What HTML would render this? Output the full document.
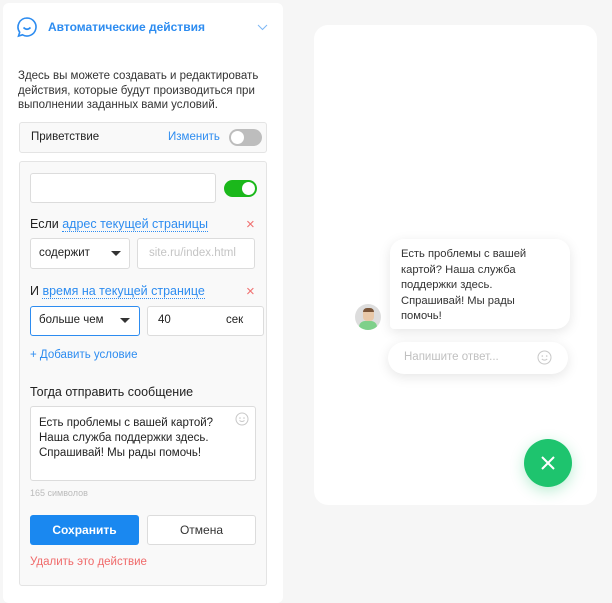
<!DOCTYPE html>
<html><head><meta charset="utf-8"><style>
*{box-sizing:border-box;margin:0;padding:0}
body{width:612px;height:589px;background:#f6f6f6;font-family:"Liberation Sans",sans-serif;position:relative;overflow:hidden;color:#222}
.a{position:absolute}
.left{left:3px;top:3px;width:280px;height:600px;background:#fff;border-radius:6px}
.box{background:#f9f9f9;border:1px solid #e4e4e4;border-radius:3px}
.inp{background:#fff;border:1px solid #dcdcdc;border-radius:3px}
.t12{font-size:11.5px}
.blue{color:#2d8cf0}
.dash{border-bottom:1px dotted #2d8cf0;line-height:13px}
.tri{width:0;height:0;border-left:5px solid transparent;border-right:5px solid transparent;border-top:5px solid #333}
</style></head><body>
<div class="a left"></div>
<svg class="a" style="left:16px;top:16px" width="22" height="22" viewBox="0 0 22 22"><path d="M11 2a9 9 0 1 1-4.5 16.8L2.5 20l1.2-3.8A9 9 0 0 1 11 2z" fill="none" stroke="#2d8cf0" stroke-width="1.6"/><path d="M7.5 11.5q3.5 3.5 7 0" fill="none" stroke="#2d8cf0" stroke-width="1.6"/></svg>
<div class="a blue" style="left:48px;top:20px;font-size:12px;font-weight:bold">Автоматические действия</div>
<svg class="a" style="left:257px;top:24px" width="11" height="8"><path d="M1 1l4.5 4.5L10 1" fill="none" stroke="#7db7f5" stroke-width="1"/></svg>
<div class="a t12" style="left:18px;top:69px;line-height:14.5px;color:#333;width:260px">Здесь вы можете создавать и редактировать действия, которые будут производиться при выполнении заданных вами условий.</div>
<div class="a box" style="left:19px;top:122px;width:248px;height:31px"></div>
<div class="a t12" style="left:31px;top:131px;color:#222">Приветствие</div>
<div class="a t12 blue" style="left:168px;top:131px">Изменить</div>
<div class="a" style="left:229px;top:129px;width:33px;height:17px;border-radius:9px;background:#bdbdbd"><div class="a" style="left:2px;top:2px;width:13px;height:13px;border-radius:50%;background:#fff"></div></div>
<div class="a box" style="left:19px;top:161px;width:248px;height:425px"></div>
<div class="a inp" style="left:30px;top:173px;width:186px;height:30px"></div>
<div class="a" style="left:224px;top:180px;width:33px;height:17px;border-radius:9px;background:#1bb81b"><div class="a" style="left:18px;top:2px;width:13px;height:13px;border-radius:50%;background:#fff"></div></div>
<div class="a" style="left:30px;top:217px;font-size:12.5px">Если <span class="blue dash">адрес текущей страницы</span></div>
<div class="a" style="left:246px;top:216px;color:#f07070;font-size:15px">×</div>
<div class="a inp" style="left:30px;top:238px;width:100px;height:31px"></div>
<div class="a t12" style="left:39px;top:247px">содержит</div><div class="a tri" style="left:111px;top:251px"></div>
<div class="a inp" style="left:137px;top:238px;width:118px;height:31px"></div>
<div class="a t12" style="left:149px;top:247px;color:#c4c4c4">site.ru/index.html</div>
<div class="a" style="left:30px;top:284px;font-size:12.5px">И <span class="blue dash">время на текущей странице</span></div>
<div class="a" style="left:246px;top:283px;color:#f07070;font-size:15px">×</div>
<div class="a inp" style="left:30px;top:306px;width:110px;height:30px;border-color:#2d8cf0"></div>
<div class="a t12" style="left:39px;top:314px">больше чем</div><div class="a tri" style="left:120px;top:318px"></div>
<div class="a inp" style="left:147px;top:306px;width:117px;height:30px"></div>
<div class="a t12" style="left:158px;top:314px">40</div><div class="a t12" style="left:226px;top:314px">сек</div>
<div class="a t12 blue" style="left:30px;top:349px">+ Добавить условие</div>
<div class="a" style="left:30px;top:385px;font-size:12.5px">Тогда отправить сообщение</div>
<div class="a inp" style="left:30px;top:406px;width:226px;height:75px"></div>
<div class="a t12" style="left:39px;top:416px;line-height:15px">Есть проблемы с вашей картой?<br>Наша служба поддержки здесь.<br>Спрашивай! Мы рады помочь!</div>
<svg class="a" style="left:235px;top:412px" width="14" height="14"><circle cx="7" cy="7" r="6" fill="none" stroke="#c8c8c8"/><circle cx="5" cy="6" r=".8" fill="#c8c8c8"/><circle cx="9" cy="6" r=".8" fill="#c8c8c8"/><path d="M4.5 8.5q2.5 2 5 0" fill="none" stroke="#c8c8c8"/></svg>
<div class="a" style="left:30px;top:488px;font-size:9px;color:#bbb">165 символов</div>
<div class="a" style="left:30px;top:515px;width:109px;height:30px;background:#1a88f0;border-radius:3px;color:#fff;font-weight:bold;font-size:12px;text-align:center;line-height:30px">Сохранить</div>
<div class="a inp" style="left:147px;top:515px;width:109px;height:30px;text-align:center;line-height:28px;font-size:12px;color:#333">Отмена</div>
<div class="a t12" style="left:30px;top:556px;color:#f06a6a">Удалить это действие</div>
<div class="a" style="left:314px;top:25px;width:283px;height:480px;background:#fff;border-radius:14px"></div>
<div class="a" style="left:390px;top:239px;width:180px;height:90px;background:#fff;border-radius:14px 14px 14px 4px;box-shadow:0 3px 12px rgba(0,0,0,.1)"></div>
<div class="a" style="left:401px;top:247px;font-size:11.2px;line-height:15.5px;color:#333">Есть проблемы с вашей<br>картой? Наша служба<br>поддержки здесь.<br>Спрашивай! Мы рады<br>помочь!</div>
<div class="a" style="left:355px;top:304px;width:26px;height:26px;border-radius:50%;background:#ddd;overflow:hidden"><div class="a" style="left:8px;top:4px;width:11px;height:13px;border-radius:4px;background:#e8c8a8;border-top:4px solid #7a5538"></div><div class="a" style="left:4px;top:17px;width:18px;height:12px;border-radius:6px 6px 0 0;background:#7ed08a"></div></div>
<div class="a" style="left:388px;top:342px;width:180px;height:32px;background:#fff;border-radius:16px;box-shadow:0 3px 12px rgba(0,0,0,.1)"></div>
<div class="a t12" style="left:404px;top:351px;color:#c0c0c0">Напишите ответ...</div>
<svg class="a" style="left:537px;top:350px" width="15" height="15"><circle cx="7.5" cy="7.5" r="6.5" fill="none" stroke="#c8c8c8"/><circle cx="5.3" cy="6" r=".8" fill="#c8c8c8"/><circle cx="9.7" cy="6" r=".8" fill="#c8c8c8"/><path d="M4.8 9q2.7 2.3 5.4 0" fill="none" stroke="#c8c8c8"/></svg>
<div class="a" style="left:524px;top:439px;width:48px;height:48px;border-radius:50%;background:#1ec46e;box-shadow:0 4px 14px rgba(30,196,110,.3)"></div>
<svg class="a" style="left:541px;top:456px" width="14" height="14"><path d="M1 1l12 12M13 1L1 13" stroke="#fff" stroke-width="2"/></svg>
</body></html>
